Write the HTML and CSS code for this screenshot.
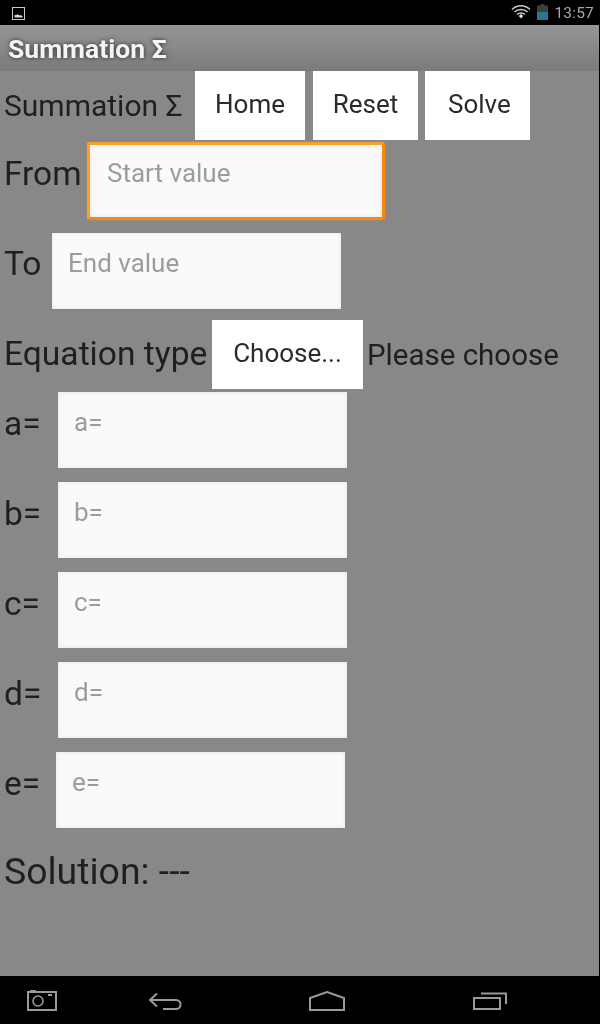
FILE: index.html
```html
<!DOCTYPE html>
<html lang="en">
<head>
<meta charset="utf-8">
<title>Summation Σ</title>
<link rel="stylesheet" href="styles.css">
</head>
<body>
<div class="screen">
  <header class="status">
    <svg class="status-pic" width="13" height="13" viewBox="0 0 13 13"><rect x=".5" y=".5" width="12" height="12" fill="none" stroke="#c8c8c8" stroke-width="1"/><path d="M2.500 10.500V8h2l1-1 1.500 1.500 1-.5 2.500 1v1.500z" fill="#d8d8d8"/></svg>
    <svg class="status-wifi" width="20" height="14" viewBox="0 0 20 14"><path d="M1 4.500C6 -.5 14 -.5 19 4.500M3.500 7C7 3.500 13 3.500 16.500 7M6 9.500C8.200 7.500 11.800 7.500 14 9.500" fill="none" stroke="#c9c9c9" stroke-width="1.500"/><path d="M7.800 11 10 8.900 12.200 11 10 13.400z" fill="#e0e0e0"/></svg>
    <svg class="status-batt" width="11" height="16" viewBox="0 0 11 16"><path d="M3.500 0h4v1.500H11V16H0V1.500h3.500z" fill="#3a3f42"/><rect y="8" width="11" height="8" fill="#2a7596"/></svg>
    <span class="clock">13:57</span>
  </header>

  <div class="actionbar">Summation Σ</div>

  <main class="content">
    <div class="row row-top">
      <span class="label">Summation Σ</span>
      <button class="btn btn-home">Home</button>
      <button class="btn btn-reset">Reset</button>
      <button class="btn btn-solve"><span class="clip">Solve</span></button>
    </div>

    <div class="row row-from">
      <span class="label">From</span>
      <input class="field field-focus" placeholder="Start value">
    </div>

    <div class="row row-to">
      <span class="label">To</span>
      <input class="field field-to" placeholder="End value">
    </div>

    <div class="row row-eq">
      <span class="label label-eq">Equation type</span>
      <button class="btn btn-choose">Choose...</button>
      <span class="label label-choice">Please choose</span>
    </div>

    <div class="row row-var"><span class="label var">a=</span><input class="field" placeholder="a="></div>
    <div class="row row-var"><span class="label var">b=</span><input class="field" placeholder="b="></div>
    <div class="row row-var"><span class="label var">c=</span><input class="field" placeholder="c="></div>
    <div class="row row-var"><span class="label var">d=</span><input class="field" placeholder="d="></div>
    <div class="row row-var row-e"><span class="label var">e=</span><input class="field" placeholder="e="></div>

    <div class="solution">Solution: ---</div>
  </main>

  <nav class="navbar">
    <svg class="nav-cam" width="30" height="21" viewBox="0 0 30 21"><path d="M3 1h6" fill="none" stroke="#9a9a9a" stroke-width="2"/><rect x="1" y="2" width="28" height="18" fill="none" stroke="#9a9a9a" stroke-width="2"/><circle cx="11" cy="11" r="5" fill="none" stroke="#9a9a9a" stroke-width="1.600"/><rect x="21" y="4" width="4" height="2" fill="#9a9a9a"/></svg>
    <svg class="nav-back" width="34" height="20" viewBox="0 0 34 20"><path d="M9 1.500 2 8l7 6.500M2 8h26a4.500 4.500 0 0 1 0 9H15" fill="none" stroke="#9a9a9a" stroke-width="2"/></svg>
    <svg class="nav-home" width="36" height="20" viewBox="0 0 36 20"><path d="M1 19V7L18 1l17 6v12z" fill="none" stroke="#9a9a9a" stroke-width="2"/></svg>
    <svg class="nav-recent" width="34" height="18" viewBox="0 0 34 18"><rect x="1" y="6" width="26" height="11" fill="none" stroke="#9a9a9a" stroke-width="2"/><path d="M8 1.500h25V12" fill="none" stroke="#9a9a9a" stroke-width="2"/></svg>
  </nav>
</div>
</body>
</html>
```
FILE: styles.css
```css
* { box-sizing: border-box; }

html, body {
  margin: 0;
  padding: 0;
  background: #000;
}

body {
  font-family: Roboto, "Noto Sans", sans-serif;
}

.screen {
  width: 600px;
  height: 1024px;
  display: flex;
  flex-direction: column;
  overflow: hidden;
  filter: blur(.45px);
}

.status {
  height: 25px;
  flex: none;
  display: flex;
  align-items: center;
  background: #000;
  color: #a8a8a8;
  padding: 0 6px 0 12px;
}

.status-pic { margin-top: 1px; }
.status-wifi { margin-left: auto; margin-right: 6px; margin-top: -1px; }
.status-batt { margin-right: 6px; margin-top: -1px; }

.clock {
  font-size: 15.500px;
  letter-spacing: .2px;
}

.actionbar {
  height: 46px;
  flex: none;
  width: 599px;
  padding: 0 8px;
  display: flex;
  align-items: center;
  background: linear-gradient(#959595, #7b7b7b);
  color: #f4f4f4;
  font-size: 26.500px;
  font-weight: 700;
  text-shadow: 0 0 4px rgba(0, 0, 0, .7);
}

.content {
  flex: 1;
  width: 599px;
  background: #888;
}

.row {
  display: flex;
  align-items: flex-start;
  padding-left: 4px;
}

.label {
  flex: none;
  font-size: 33.500px;
  line-height: 38px;
  margin-top: 12px;
  color: #1f1f1f;
  white-space: nowrap;
}

.btn {
  flex: none;
  height: 69px;
  border: 0;
  margin: 0;
  padding: 0 0 4px;
  background: #fff;
  color: #2b2b2b;
  font-family: inherit;
  font-size: 26px;
}

.row-top, .row-eq { height: 69px; align-items: center; }
.row-top .label, .row-eq .label { margin-top: 0; }
.row-top .label { width: 191px; font-size: 30px; }
.btn-home { width: 110px; }
.btn-reset { width: 105px; margin-left: 8px; }
.btn-solve { width: 105px; margin-left: 7px; text-align: left; padding-left: 23px; }

.clip {
  display: block;
  width: 62px;
  overflow: hidden;
  white-space: nowrap;
}

.field {
  display: block;
  flex: none;
  height: 76px;
  width: 289px;
  border: 0;
  border-radius: 0;
  outline: 0;
  background: #fafafa;
  box-shadow: inset 0 0 5px rgba(0, 0, 0, .08);
  font-family: inherit;
  font-size: 26px;
  padding: 0 16px 16px;
  color: #222;
}

.field::placeholder { color: #9c9c9c; opacity: 1; }

.field-focus {
  width: 298px;
  height: 78px;
  border: 3px solid #f58a12;
  border-top-color: #f9a030;
  border-left-color: #f9a030;
  border-radius: 3px;
  box-shadow: 0 0 2px rgba(245, 138, 18, .6), inset 0 0 5px rgba(0, 0, 0, .08);
  padding: 0 17px 16px;
}

.row-from { margin-top: 2px; }
.row-from .label { width: 83px; margin-top: 13px; }
.row-to { margin-top: 13px; }
.row-to .label { width: 48px; }
.row-eq { margin-top: 11px; }
.row-eq .label-eq { width: 208px; font-size: 33.600px; padding-bottom: 2px; }
.row-eq .label-choice { margin-left: 4px; font-size: 29.500px; }
.btn-choose { width: 151px; }

.row-var { margin-top: 14px; }
.row-eq + .row-var { margin-top: 3px; }
.var { width: 54px; margin-top: 13px; }
.row-e .var { width: 52px; }

.solution {
  margin-top: 23px;
  padding-left: 4px;
  font-size: 37.400px;
  line-height: 40px;
  color: #1f1f1f;
}

.navbar {
  height: 48px;
  flex: none;
  background: #000;
  position: relative;
}

.navbar svg { position: absolute; }
.nav-cam { left: 27px; top: 14px; }
.nav-back { left: 148px; top: 16px; }
.nav-home { left: 309px; top: 15px; }
.nav-recent { left: 473px; top: 16px; }
```
